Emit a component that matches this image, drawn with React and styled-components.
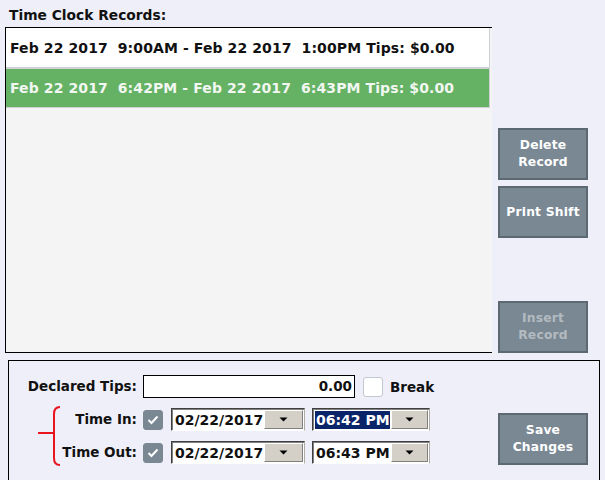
import React from "react";
import styled, { createGlobalStyle } from "styled-components";

const Global = createGlobalStyle`
  html, body { margin: 0; padding: 0; background: #efeff9; }
  * { box-sizing: border-box; }
`;

const Page = styled.div`
  width: 605px;
  height: 480px;
  overflow: hidden;
  background: #efeff9;
  font-family: "DejaVu Sans", Verdana, sans-serif;
  font-weight: bold;
  font-size: 14px;
  color: #111;
  display: flex;
  flex-direction: column;
`;

const Title = styled.div`
  height: 27px;
  padding: 7px 0 0 9px;
  line-height: 16px;
  font-size: 13.8px;
`;

const TopRow = styled.div`
  display: flex;
  height: 326px;
  margin-left: 5px;
`;

const ListBox = styled.div`
  width: 487px;
  height: 326px;
  border-top: 1px solid #000;
  border-left: 1px solid #000;
  border-bottom: 1px solid #000;
  background: #f4f4f4;
  display: flex;
  flex-direction: column;
`;

const RecordRow = styled.div`
  width: 484px;
  height: 40px;
  padding-left: 4px;
  display: flex;
  align-items: center;
  white-space: pre;
  letter-spacing: 0.1px;
  background: ${(p) => (p.$selected ? "#65b265" : "#ffffff")};
  color: ${(p) => (p.$selected ? "#f2f7f2" : "#111")};
  border: 1px solid #cfd2d4;
  border-top: ${(p) => (p.$first ? "none" : "1px solid #cfd2d4")};
  border-left: none;
`;

const ButtonColumn = styled.div`
  display: flex;
  flex-direction: column;
  gap: 6px;
  margin-left: 6px;
  padding-top: 101px;
`;

const ActionButton = styled.div`
  width: 90px;
  height: 52px;
  background: #7a8893;
  border: 2px solid #5c6872;
  color: ${(p) => (p.$disabled ? "#b3bbc1" : "#ffffff")};
  display: flex;
  align-items: center;
  justify-content: center;
  text-align: center;
  line-height: 17px;
  font-size: 12.3px;
  letter-spacing: 0.2px;
  margin-top: ${(p) => (p.$bottom ? "auto" : "0")};
`;

const Panel = styled.div`
  position: relative;
  margin: 7px 5px 0 8px;
  flex: 1;
  border: 1px solid #000;
  border-bottom: none;
  display: flex;
  padding: 14px 11px 0 0;
`;

const Form = styled.div`
  display: grid;
  grid-template-columns: 128px auto;
  column-gap: 6px;
  row-gap: 10px;
  align-items: center;
  align-content: start;
`;

const Label = styled.div`
  text-align: right;
  line-height: 23px;
  font-size: 13.5px;
`;

const Controls = styled.div`
  display: flex;
  align-items: center;
  height: 23px;
  gap: ${(p) => p.$gap || 8}px;
`;

const TipsInput = styled.div`
  width: 212px;
  height: 23px;
  background: #fff;
  border: 1px solid #000;
  text-align: right;
  padding-right: 2px;
  line-height: 21px;
  font-size: 13.5px;
`;

const Check = styled.div`
  width: 20px;
  height: 20px;
  border-radius: 3px;
  background: ${(p) => (p.$checked ? "#7a8893" : "#ffffff")};
  border: 1px solid ${(p) => (p.$checked ? "#7a8893" : "#c3c7cf")};
  display: flex;
  align-items: center;
  justify-content: center;
`;

const BreakLabel = styled.span`
  margin-left: -1px;
  font-size: 13.5px;
`;

const Combo = styled.div`
  width: ${(p) => p.$width}px;
  height: 23px;
  display: flex;
  border-top: 1px solid #404040;
  border-left: 1px solid #404040;
  border-right: 1px solid #b0aca4;
  border-bottom: 1px solid #ffffff;
  box-shadow: inset 1px 1px 0 #808080;
  background: #fff;
  margin-left: ${(p) => p.$ml || 0}px;
`;

const ComboText = styled.div`
  flex: 1;
  margin: 2px 1px 1px 2px;
  padding-left: 1px;
  line-height: 18px;
  background: ${(p) => (p.$selected ? "#0a246a" : "transparent")};
  color: ${(p) => (p.$selected ? "#ffffff" : "#111")};
  white-space: pre;
`;

const ComboButton = styled.div`
  width: 41px;
  margin: 1px 1px 1px 0;
  background: #d4d0c8;
  border-top: 1px solid #ffffff;
  border-left: 1px solid #ffffff;
  border-right: 1px solid #808080;
  border-bottom: 1px solid #808080;
  display: flex;
  align-items: center;
  justify-content: center;
`;

const SaveColumn = styled.div`
  margin-left: auto;
  padding-top: 38px;
`;

const Brace = styled.svg`
  position: absolute;
  left: 27px;
  top: 43px;
`;

const Triangle = () => (
  <svg width="9" height="5" viewBox="0 0 9 5">
    <polygon points="0.5,0.5 8.5,0.5 4.5,4.5" fill="#000" />
  </svg>
);

const CheckMark = () => (
  <svg width="12" height="10" viewBox="0 0 12 10">
    <polyline points="1.5,5 4.5,8 10.5,1.5" fill="none" stroke="#fff" strokeWidth="2" />
  </svg>
);

function DateTimeRow({ date, time, timeSelected }) {
  return (
    <Controls $gap={8}>
      <Check $checked>
        <CheckMark />
      </Check>
      <Combo $width={134}>
        <ComboText>{date}</ComboText>
        <ComboButton>
          <Triangle />
        </ComboButton>
      </Combo>
      <Combo $width={118} $ml={-1}>
        <ComboText $selected={timeSelected}>{time}</ComboText>
        <ComboButton>
          <Triangle />
        </ComboButton>
      </Combo>
    </Controls>
  );
}

export default function App() {
  const records = [
    "Feb 22 2017  9:00AM - Feb 22 2017  1:00PM Tips: $0.00",
    "Feb 22 2017  6:42PM - Feb 22 2017  6:43PM Tips: $0.00",
  ];
  return (
    <>
      <Global />
      <Page>
        <Title>Time Clock Records:</Title>
        <TopRow>
          <ListBox>
            {records.map((r, i) => (
              <RecordRow key={i} $first={i === 0} $selected={i === 1}>
                {r}
              </RecordRow>
            ))}
          </ListBox>
          <ButtonColumn>
            <ActionButton>
              Delete
              <br />
              Record
            </ActionButton>
            <ActionButton>Print Shift</ActionButton>
            <ActionButton $disabled $bottom>
              Insert
              <br />
              Record
            </ActionButton>
          </ButtonColumn>
        </TopRow>
        <Panel>
          <Form>
            <Label>Declared Tips:</Label>
            <Controls $gap={8}>
              <TipsInput>0.00</TipsInput>
              <Check />
              <BreakLabel>Break</BreakLabel>
            </Controls>
            <Label>Time In:</Label>
            <DateTimeRow date="02/22/2017" time="06:42 PM" timeSelected />
            <Label>Time Out:</Label>
            <DateTimeRow date="02/22/2017" time="06:43 PM" />
          </Form>
          <SaveColumn>
            <ActionButton>
              Save
              <br />
              Changes
            </ActionButton>
          </SaveColumn>
          <Brace width="26" height="64" viewBox="0 0 26 64">
            <path d="M24,3 Q18,3 18,10 L18,54 Q18,61 24,61" fill="none" stroke="#e8141e" strokeWidth="2" />
            <path d="M2,29 L18,29" fill="none" stroke="#e8141e" strokeWidth="2" />
          </Brace>
        </Panel>
      </Page>
    </>
  );
}
